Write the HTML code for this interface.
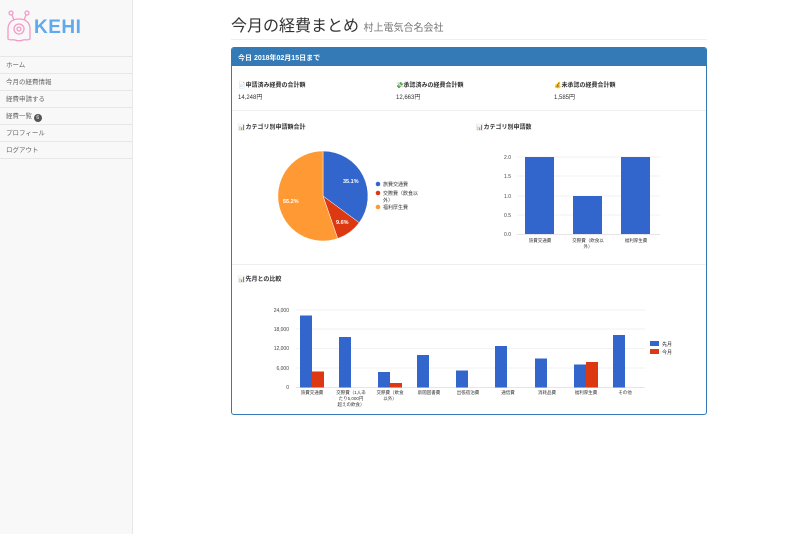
<!DOCTYPE html>
<html><head><meta charset="utf-8"><style>
*{margin:0;padding:0;box-sizing:border-box}
body{width:800px;height:534px;background:#fff;font-family:"Liberation Sans","Noto Sans CJK JP",sans-serif;position:relative;overflow:hidden;color:#333}
.abs{position:absolute}
#side{left:0;top:0;width:133px;height:534px;background:#f8f8f8;border-right:1px solid #e7e7e7}
.mi{position:absolute;left:0;width:133px;height:17px;border-top:1px solid #e7e7e7;font-size:6.5px;color:#666;padding:6px 0 0 6px;line-height:6px}
.t{position:absolute;white-space:nowrap}
</style></head><body>
<div id="side" class="abs">
<svg class="abs" style="left:5px;top:10px" width="28" height="33" viewBox="0 0 28 33">
<g fill="none" stroke="#f59ac8" stroke-width="1.3">
<circle cx="6" cy="3" r="2"/><circle cx="22" cy="3" r="2"/>
<path d="M7 5 L9 10 M21 5 L19 10"/>
<path d="M3 29 L3 19 C3 12 8 9 14 9 C20 9 25 12 25 19 L25 29 C22 31 20 29 18 30 C16 31 12 31 10 30 C8 29 6 31 3 29 Z"/>
<circle cx="14" cy="19" r="5"/><circle cx="14" cy="19" r="2"/>
</g></svg>
<div class="t" style="left:34px;top:17px;font-size:19px;font-weight:bold;color:#5fa9ee;letter-spacing:0.5px">KEHI</div>
<div class="mi" style="top:56px">ホーム</div>
<div class="mi" style="top:73px">今月の経費情報</div>
<div class="mi" style="top:90px">経費申請する</div>
<div class="mi" style="top:107px">経費一覧 <span style="display:inline-block;width:8px;height:8px;border-radius:4px;background:#555;color:#fff;font-size:5px;text-align:center;line-height:8px;vertical-align:-1px">6</span></div>
<div class="mi" style="top:124px">プロフィール</div>
<div class="mi" style="top:141px">ログアウト</div>
<div class="mi" style="top:158px;height:1px;padding:0"></div>
</div>

<div class="t" style="left:231px;top:12px;font-size:16px;color:#333">今月の経費まとめ <span style="font-size:10px;color:#777">村上電気合名会社</span></div>
<div class="abs" style="left:231px;top:39px;width:476px;height:1px;background:#eee"></div>

<div class="abs" style="left:231px;top:47px;width:476px;height:368px;border:1px solid #337ab7;border-radius:3px;overflow:hidden">
<div class="abs" style="left:0;top:0;width:476px;height:18px;background:#337ab7;color:#fff;font-size:7px;font-weight:bold;padding:5px 0 0 6px">今日 2018年02月15日まで</div>
<div class="abs" style="left:0;top:62px;width:476px;height:1px;background:#eee"></div>
<div class="abs" style="left:0;top:216px;width:476px;height:1px;background:#eee"></div>
</div>

<div class="t" style="left:238px;top:80px;font-size:6px;font-weight:bold">📄申請済み経費の合計額</div>
<div class="t" style="left:238px;top:92px;font-size:6px">14,248円</div>
<div class="t" style="left:396px;top:80px;font-size:6px;font-weight:bold">💸承認済みの経費合計額</div>
<div class="t" style="left:396px;top:92px;font-size:6px">12,663円</div>
<div class="t" style="left:554px;top:80px;font-size:6px;font-weight:bold">💰未承認の経費合計額</div>
<div class="t" style="left:554px;top:92px;font-size:6px">1,585円</div>

<div class="t" style="left:238px;top:122px;font-size:6px;font-weight:bold">📊カテゴリ別申請額合計</div>
<div class="t" style="left:476px;top:122px;font-size:6px;font-weight:bold">📊カテゴリ別申請数</div>
<div class="t" style="left:238px;top:274px;font-size:6px;font-weight:bold">📊先月との比較</div>

<svg class="abs" style="left:0;top:0" width="800" height="534" font-family="Liberation Sans,Noto Sans CJK JP,sans-serif">
<path d="M323 196 L323 151 A45 45 0 0 1 359.2 222.7 Z" fill="#3366cc" stroke="#fff" stroke-width="0.5"/>
<path d="M323 196 L359.2 222.7 A45 45 0 0 1 337.7 238.5 Z" fill="#dc3912" stroke="#fff" stroke-width="0.5"/>
<path d="M323 196 L337.7 238.5 A45 45 0 1 1 323 151 Z" fill="#ff9933" stroke="#fff" stroke-width="0.5"/>
<g font-size="5.5" font-weight="bold" fill="#fff"><text x="343" y="183">35.1%</text><text x="336" y="224">9.6%</text><text x="283" y="203">55.2%</text></g>
<g font-size="5" fill="#333">
<circle cx="378" cy="184" r="2.3" fill="#3366cc"/><text x="383" y="186">旅費交通費</text>
<circle cx="378" cy="193" r="2.3" fill="#dc3912"/><text x="383" y="195">交際費（飲食以</text><text x="383" y="202">外）</text>
<circle cx="378" cy="207" r="2.3" fill="#ff9933"/><text x="383" y="209">福利厚生費</text>
</g>
<g stroke="#e6e6e6" stroke-width="0.6"><line x1="517" y1="157" x2="660" y2="157"/><line x1="517" y1="176" x2="660" y2="176"/><line x1="517" y1="196" x2="660" y2="196"/><line x1="517" y1="215" x2="660" y2="215"/></g>
<line x1="517" y1="234.5" x2="660" y2="234.5" stroke="#ccc" stroke-width="0.6"/>
<g font-size="5" fill="#444" text-anchor="end"><text x="511" y="159">2.0</text><text x="511" y="178">1.5</text><text x="511" y="198">1.0</text><text x="511" y="217">0.5</text><text x="511" y="236">0.0</text></g>
<g fill="#3366cc"><rect x="525" y="157" width="29" height="77"/><rect x="573" y="196" width="29" height="38"/><rect x="621" y="157" width="29" height="77"/></g>
<g font-size="4.5" fill="#333" text-anchor="middle"><text x="540" y="242">旅費交通費</text><text x="588" y="242">交際費（飲食以</text><text x="588" y="248">外）</text><text x="636" y="242">福利厚生費</text></g>
<g stroke="#e6e6e6" stroke-width="0.6"><line x1="296" y1="310" x2="645" y2="310"/><line x1="296" y1="329" x2="645" y2="329"/><line x1="296" y1="348.5" x2="645" y2="348.5"/><line x1="296" y1="368" x2="645" y2="368"/></g>
<line x1="296" y1="387.5" x2="645" y2="387.5" stroke="#ccc" stroke-width="0.6"/>
<g font-size="5" fill="#444" text-anchor="end"><text x="289" y="312">24,000</text><text x="289" y="331">18,000</text><text x="289" y="350">12,000</text><text x="289" y="370">6,000</text><text x="289" y="389">0</text></g>
<g fill="#3366cc">
<rect x="300" y="315.5" width="12" height="72"/>
<rect x="339" y="337" width="12" height="50.5"/>
<rect x="378" y="372" width="12" height="15.5"/>
<rect x="417" y="355" width="12" height="32.5"/>
<rect x="456" y="370.5" width="12" height="17"/>
<rect x="495" y="346" width="12" height="41.5"/>
<rect x="535" y="358.5" width="12" height="29"/>
<rect x="574" y="364.5" width="12" height="23"/>
<rect x="613" y="335" width="12" height="52.5"/>
</g>
<g fill="#dc3912">
<rect x="312" y="371.5" width="12" height="16"/>
<rect x="390" y="383" width="12" height="4.5"/>
<rect x="586" y="362" width="12" height="25.5"/>
</g>
<g font-size="4.5" fill="#333" text-anchor="middle">
<text x="312" y="394">旅費交通費</text>
<text x="351" y="394">交際費（1人あ</text><text x="351" y="400">たり5,000円</text><text x="351" y="406">超えの飲食）</text>
<text x="390" y="394">交際費（飲食</text><text x="390" y="400">以外）</text>
<text x="429" y="394">新聞図書費</text>
<text x="468" y="394">出張宿泊費</text>
<text x="508" y="394">通信費</text>
<text x="547" y="394">消耗品費</text>
<text x="586" y="394">福利厚生費</text>
<text x="625" y="394">その他</text>
</g>
<rect x="650" y="341" width="9" height="5" fill="#3366cc"/><text x="662" y="346" font-size="5" fill="#222">先月</text>
<rect x="650" y="349" width="9" height="5" fill="#dc3912"/><text x="662" y="354" font-size="5" fill="#222">今月</text>
</svg>
</body></html>
